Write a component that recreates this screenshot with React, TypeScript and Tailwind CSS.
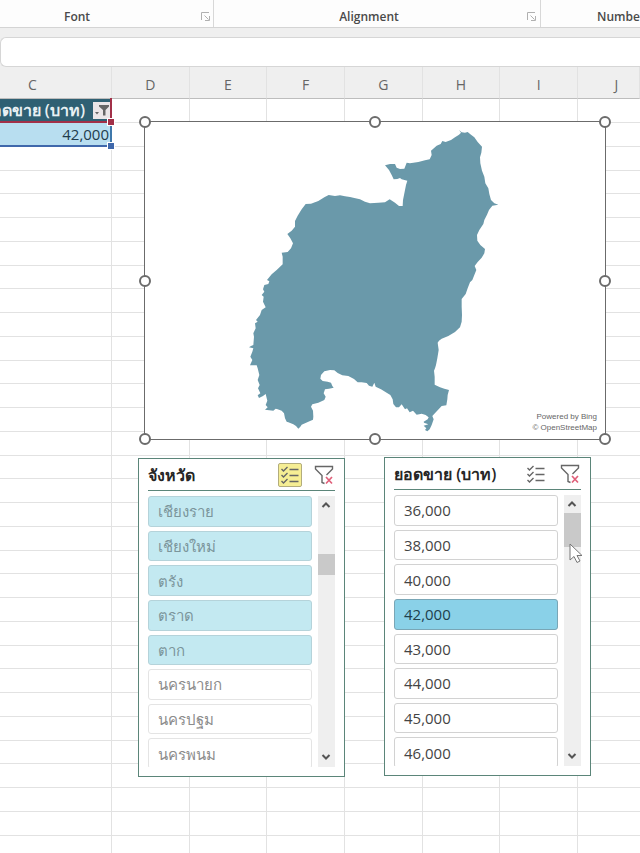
import { clsx } from "clsx";

const columns = ["C", "D", "E", "F", "G", "H", "I", "J"];
const rows = Array.from({ length: 32 }, (_, i) => i + 1);

const provinces = [
  { label: "เชียงราย", selected: true },
  { label: "เชียงใหม่", selected: true },
  { label: "ตรัง", selected: true },
  { label: "ตราด", selected: true },
  { label: "ตาก", selected: true },
  { label: "นครนายก", selected: false },
  { label: "นครปฐม", selected: false },
  { label: "นครพนม", selected: false },
];

const sales = [
  { label: "36,000", selected: false },
  { label: "38,000", selected: false },
  { label: "40,000", selected: false },
  { label: "42,000", selected: true },
  { label: "43,000", selected: false },
  { label: "44,000", selected: false },
  { label: "45,000", selected: false },
  { label: "46,000", selected: false },
];

type Item = { label: string; selected: boolean };

function LauncherIcon() {
  return (
    <svg viewBox="0 0 10 10" className="size-[10px]" fill="none" stroke="#b0b0b0">
      <path d="M.5 8V.5H8M3.5 3.5l4 4M8.5 4v4.500H4" />
    </svg>
  );
}

function MultiSelectIcon() {
  return (
    <svg viewBox="0 0 20 20" className="size-5" fill="none" stroke="#666" strokeWidth="1.4">
      <path d="M1.500 4l2 2L7.500 2M1.500 10l2 2L7.500 8M1.500 16l2 2L7.500 14" />
      <path d="M9.500 4.500h9M9.500 10.500h9M9.500 16.500h9" />
    </svg>
  );
}

function ClearFilterIcon() {
  return (
    <svg viewBox="0 0 20 20" className="size-5" fill="none" strokeWidth="1.4">
      <path d="M10.500 18.500L8 17.500V10.500L1.500 4V1.500h17V4L12.500 10" stroke="#666" />
      <path d="M12 12l6 6.500M18 12l-6 6.500" stroke="#e0607a" strokeWidth="1.700" />
    </svg>
  );
}

function Chevron({ down = false }: { down?: boolean }) {
  return (
    <svg viewBox="0 0 10 8" className="h-2 w-[10px]" fill="none" stroke="#555" strokeWidth="2">
      <path d={down ? "M1.500 2L5 5.500 8.500 2" : "M1.500 6L5 2.500 8.500 6"} />
    </svg>
  );
}

function RibbonLabels() {
  return (
    <header className="flex h-7 shrink-0 border-b border-[#d4d4d4] bg-[#fdfdfd] text-xs font-semibold text-[#4a4a4a]">
      <div className="relative flex w-[214px] shrink-0 items-end border-r border-[#d8d8d8] pb-[2px] pl-16">
        Font
        <button aria-label="Font settings" className="absolute right-[2px] bottom-[5px]">
          <LauncherIcon />
        </button>
      </div>
      <div className="relative flex flex-1 items-end justify-center border-r border-[#d8d8d8] pr-4 pb-[2px]">
        Alignment
        <button aria-label="Alignment settings" className="absolute right-[3px] bottom-[5px]">
          <LauncherIcon />
        </button>
      </div>
      <div className="flex w-[99px] shrink-0 items-end overflow-hidden pb-[2px] pl-14">Number</div>
    </header>
  );
}

function HeaderCell() {
  return (
    <td className="relative border-b-2 border-[#a23048] bg-[#2f6073] p-0">
      <div className="flex h-[22px] items-center justify-end gap-2 overflow-hidden pr-px">
        <span className="text-base leading-5 font-semibold whitespace-nowrap text-[#e8f0f3]">ยอดขาย (บาท)</span>
        <button aria-label="Filter" className="flex h-[17px] w-[18px] shrink-0 items-center justify-center bg-[#ebe6e8]">
          <svg viewBox="0 0 14 12" className="h-3 w-[14px]" fill="#666">
            <path d="M4 1h10v1.500L10.500 6v5.500H8V6L4 2.500zM0 8h4L2 10.500z" />
          </svg>
        </button>
      </div>
      <span className="absolute -top-px right-0 h-6 w-[2px] bg-[#a23048]" />
      <span className="absolute -right-[2px] -bottom-[4px] z-10 size-[6px] bg-[#a23048] ring-1 ring-white" />
    </td>
  );
}

function ValueCell() {
  return (
    <td className="relative border-b-2 border-[#3f68ab] bg-[#b8def0] p-0">
      <div className="flex h-[22px] items-center justify-end pr-[3px] text-[15px] leading-5 text-[#223c4c]">42,000</div>
      <span className="absolute top-0 right-0 h-6 w-[2px] bg-[#3f78ab]" />
      <span className="absolute -right-[2px] -bottom-[4px] z-10 size-[6px] bg-[#3f68ab] ring-1 ring-white" />
    </td>
  );
}

function Grid() {
  return (
    <table className="w-full table-fixed border-separate border-spacing-0">
      <thead>
        <tr className="h-8">
          {columns.map((name) => (
            <th
              key={name}
              className={clsx(
                "border-r border-b border-r-[#e2e2e2] border-b-[#bdbdbd] bg-[#efefef] pt-1 pb-0 text-sm leading-5 font-normal text-[#666]",
                name === "C" && "w-28 pr-[46px] pl-0",
                name === "J" && "w-[62px] pr-0 pl-4",
                name !== "C" && name !== "J" && "px-0",
              )}
            >
              {name}
            </th>
          ))}
        </tr>
      </thead>
      <tbody>
        {rows.map((row) => (
          <tr key={row} className="h-6 nth-[4n]:h-[23px]">
            {columns.map((name) => {
              if (name === "C" && row === 1) return <HeaderCell key={name} />;
              if (name === "C" && row === 2) return <ValueCell key={name} />;
              return (
                <td
                  key={name}
                  className={clsx("border-b border-[#e2e2e2] p-0", name !== "J" && "border-r")}
                />
              );
            })}
          </tr>
        ))}
      </tbody>
    </table>
  );
}

// Province outline, clockwise from the northern tip
const outline =
  "672,30 680,37 690,38 698,36 708,44 718,52 728,66 741,80 739,98 735,112 736,130 741,152 748,170 751,190 760,205 763,222 " +
  "768,240 778,250 790,254 772,257 762,270 756,284 748,300 745,312 733,330 726,345 727,362 736,375 750,387 748,400 740,413 " +
  "728,426 719,438 724,450 718,465 712,480 705,487 698,505 692,522 680,537 680,560 681,585 680,605 675,622 660,636 640,648 " +
  "620,656 612,662 608,668 611,690 607,715 603,735 600,745 597,752 599,770 599,794 615,802 628,806 642,810 638,825 637,838 " +
  "634,856 620,858 608,871 592,888 596,898 590,915 584,928 577,934 570,930 574,925 566,917 580,913 567,908 566,905 578,898 " +
  "581,892 572,885 560,881 545,884 534,872 524,877 516,865 510,868 500,853 492,862 483,862 475,852 473,838 466,825 455,818 " +
  "438,808 422,800 418,788 412,800 402,797 395,789 380,787 368,787 357,777 340,768 322,766 308,759 298,751 285,750 268,754 " +
  "258,765 256,776 263,783 278,785 288,788 292,798 296,803 282,806 270,808 266,820 272,830 268,840 250,848 232,853 228,860 " +
  "234,872 235,890 234,899 220,905 200,914 196,920 190,926 183,918 175,913 160,907 155,905 150,895 147,880 140,872 128,868 " +
  "122,866 115,872 90,869 98,862 92,855 97,842 92,822 84,828 72,834 68,826 76,820 69,805 74,795 68,780 73,765 68,745 " +
  "65,736 45,736 52,720 46,710 52,695 55,685 42,682 48,678 55,675 57,650 55,640 62,625 60,610 68,605 63,600 75,585 80,570 " +
  "92,562 84,545 86,530 80,525 88,515 84,508 88,495 100,492 103,484 96,480 110,463 125,450 143,433 143,410 140,398 158,396 " +
  "168,385 174,370 166,355 157,342 170,332 180,320 180,303 188,287 200,268 212,252 228,251 250,243 268,232 281,225 300,228 " +
  "315,226 330,229 345,231 358,234 375,238 390,245 405,250 430,248 450,247 464,238 480,248 492,258 503,258 504,240 510,210 " +
  "513,195 517,182 500,178 495,174 487,177 476,178 470,165 462,150 450,136 465,132 480,132 485,143 495,147 508,146 515,128 " +
  "525,130 550,126 570,121 584,118 590,105 588,92 605,77 617,72 622,63 632,66 648,60 660,52 672,44 678,38";

const handles = [
  "left-0 top-0",
  "left-1/2 top-0",
  "left-full top-0",
  "left-0 top-1/2",
  "left-full top-1/2",
  "left-0 top-full",
  "left-1/2 top-full",
  "left-full top-full",
];

function MapChart() {
  return (
    <figure className="absolute top-[54px] left-36 h-[319px] w-[462px] border border-[#6b6b6b] bg-white">
      <svg viewBox="-270 6 1380 951" className="size-full" fill="#6a99aa">
        <polygon points={outline} />
      </svg>
      <figcaption className="absolute right-2 bottom-[6px] text-right font-['Liberation_Sans',sans-serif] text-[8px] leading-[11px] text-[#666]">
        Powered by Bing
        <br />© OpenStreetMap
      </figcaption>
      {handles.map((position) => (
        <span
          key={position}
          className={clsx("absolute size-3 -translate-1/2 rounded-full border-2 border-[#6b6b6b] bg-white", position)}
        />
      ))}
    </figure>
  );
}

function Slicer({
  title,
  items,
  faded = false,
  multiSelect = false,
  className,
  thumbClass,
}: {
  title: string;
  items: Item[];
  faded?: boolean;
  multiSelect?: boolean;
  className: string;
  thumbClass: string;
}) {
  return (
    <section className={clsx("absolute h-[319px] w-[207px] border border-[#5b8579] bg-white px-[9px]", className)}>
      <div className="flex h-8 items-center border-b border-[#5b8579]">
        <h2 className="flex-1 text-base leading-6 font-semibold whitespace-nowrap text-[#262626]">{title}</h2>
        <button
          aria-label="Multi-select"
          className={clsx(
            "mr-3 flex size-6 items-center justify-center rounded-xs border",
            multiSelect ? "border-[#b3ad7c] bg-[#f6ee94]" : "border-transparent",
          )}
        >
          <MultiSelectIcon />
        </button>
        <button aria-label="Clear filter" className="mr-px">
          <ClearFilterIcon />
        </button>
      </div>
      <div className="mt-[5px] flex h-[271px] gap-[6px] overflow-hidden">
        <div className="grid h-[273px] flex-1 grid-rows-8 gap-1">
          {items.map((item) => (
            <button
              key={item.label}
              aria-pressed={item.selected}
              className={clsx(
                "flex items-center rounded-[3px] border px-[9px] text-left text-[15px] leading-5",
                faded && item.selected && "border-[#b5d3da] bg-[#c3e9f1] text-[#7b959b]",
                faded && !item.selected && "border-[#e4e4e4] bg-white text-[#8c8c8c]",
                !faded && item.selected && "border-[#79a6b6] bg-[#8ad1e8] text-[#20404c]",
                !faded && !item.selected && "border-[#d2d2d2] bg-white text-[#444]",
              )}
            >
              {item.label}
            </button>
          ))}
        </div>
        <div className="flex w-[17px] flex-col bg-[#efefef]">
          <button aria-label="Scroll up" className="flex h-[18px] w-full shrink-0 items-center pl-[3px]">
            <Chevron />
          </button>
          <div className="w-full flex-1">
            <div className={clsx("w-full bg-[#c9c9c9]", thumbClass)} />
          </div>
          <button aria-label="Scroll down" className="flex h-5 w-full shrink-0 items-center pl-[3px]">
            <Chevron down />
          </button>
        </div>
      </div>
    </section>
  );
}

export default function App() {
  return (
    <div className="flex h-screen flex-col overflow-hidden bg-[#efefef] font-['Open_Sans','Noto_Sans',sans-serif]">
      <RibbonLabels />
      <div className="shrink-0 pt-[9px]">
        <input
          aria-label="Formula bar"
          className="block h-[30px] w-full rounded-l-md border border-r-0 border-[#d6d6d6] bg-white px-2 text-sm"
        />
      </div>
      <main className="relative flex-1 overflow-hidden bg-white">
        <Grid />
        <MapChart />
        <Slicer
          title="จังหวัด"
          items={provinces}
          faded
          multiSelect
          className="top-[391px] left-[138px]"
          thumbClass="mt-10 h-[21px]"
        />
        <Slicer title="ยอดขาย (บาท)" items={sales} className="top-[390px] left-[384px]" thumbClass="h-[34px]" />
        <svg viewBox="0 0 14 20" className="absolute top-[476px] left-[569px] h-5 w-[14px]" fill="white" stroke="#777">
          <path d="M1 1v16l4-3.500 3 6 3-1.500-3-5.500h5z" />
        </svg>
      </main>
    </div>
  );
}
